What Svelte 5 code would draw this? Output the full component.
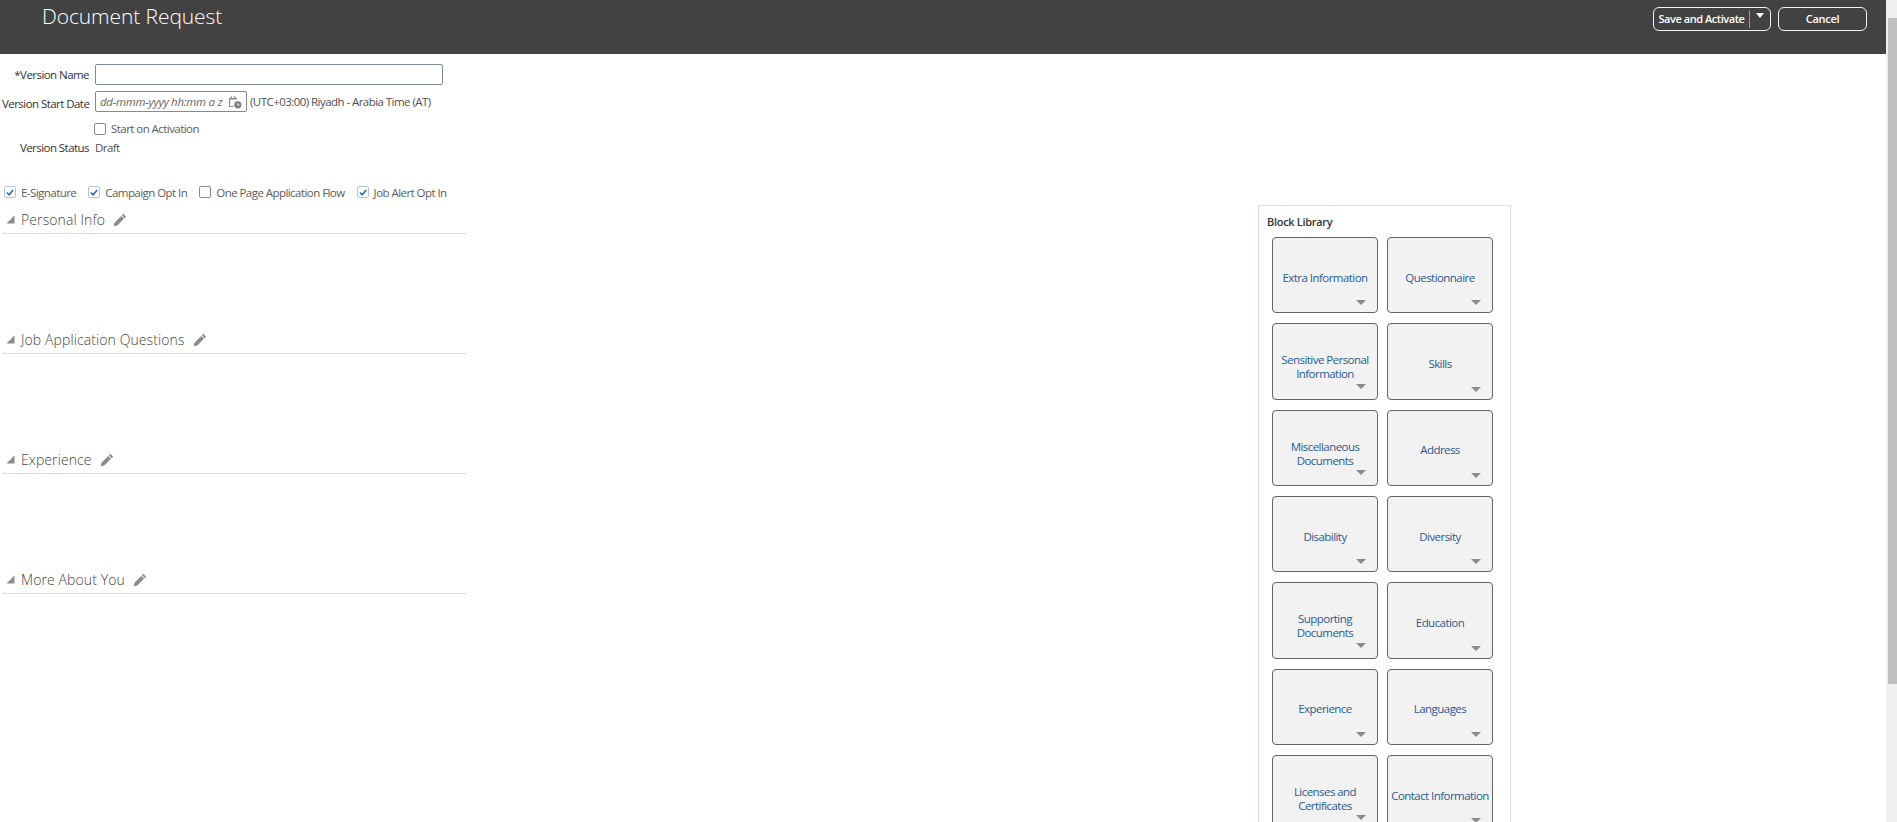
<script>
  const options = [
    { label: 'E-Signature', checked: true },
    { label: 'Campaign Opt In', checked: true },
    { label: 'One Page Application Flow', checked: false },
    { label: 'Job Alert Opt In', checked: true }
  ];
  const sections = ['Personal Info', 'Job Application Questions', 'Experience', 'More About You'];
  const blocks = [
    { label: 'Extra Information' }, { label: 'Questionnaire' },
    { label: 'Sensitive Personal Information', two: true }, { label: 'Skills' },
    { label: 'Miscellaneous Documents', two: true }, { label: 'Address' },
    { label: 'Disability' }, { label: 'Diversity' },
    { label: 'Supporting Documents', two: true }, { label: 'Education' },
    { label: 'Experience' }, { label: 'Languages' },
    { label: 'Licenses and Certificates', two: true }, { label: 'Contact Information' }
  ];
</script>

<div class="page">
  <div class="content">
    <header class="topbar">
      <h1>Document Request</h1>
      <div class="actions">
        <div class="btn split">
          <span class="split-label">Save and Activate</span>
          <span class="split-arrow"><i></i></span>
        </div>
        <div class="btn cancel">Cancel</div>
      </div>
    </header>

    <main class="body">
      <div class="left">
        <div class="form-row name-row">
          <span class="lbl">*Version Name</span>
          <input class="text-input" type="text" />
        </div>
        <div class="form-row date-row">
          <span class="lbl">Version Start Date</span>
          <div class="date-input">
            <span class="placeholder">dd-mmm-yyyy hh:mm a z</span>
            <svg width="14" height="14" viewBox="0 0 14 14">
              <path d="M1 3h8v1.500H2.200V11H5.500v1H1z" fill="#8f8f8f" />
              <path d="M2.800 1.200h1.400v2.600H2.800zM6 1.200h1.400v2.600H6z" fill="#8f8f8f" />
              <circle cx="9.800" cy="9.800" r="3.600" fill="#7d7d7d" />
              <path d="M9.800 8.200v1.800h1.800" stroke="#fff" stroke-width="0.900" fill="none" />
            </svg>
          </div>
          <span class="tz">(UTC+03:00) Riyadh - Arabia Time (AT)</span>
        </div>
        <label class="activation">
          <span class="box"></span>
          <span>Start on Activation</span>
        </label>
        <div class="form-row status-row">
          <span class="lbl">Version Status</span>
          <span class="value">Draft</span>
        </div>

        <div class="options">
          {#each options as opt}
            <span class="option">
              <span class="box" class:checked={opt.checked}>
                {#if opt.checked}
                  <svg width="11" height="11" viewBox="0 0 11 11">
                    <path d="M2 5.500l2.500 2.500L9 2.800" stroke="#1a6fc0" stroke-width="1.700" fill="none" />
                  </svg>
                {/if}
              </span>
              {opt.label}
            </span>
          {/each}
        </div>

        {#each sections as title}
          <section class="section">
            <div class="section-head">
              <svg class="twisty" width="9" height="9" viewBox="0 0 9 9">
                <path d="M8.500 0.500v8h-8z" fill="#8c8c8c" />
              </svg>
              <h2>{title}</h2>
              <svg class="pencil" width="14" height="14" viewBox="0 0 13 13">
                <path d="M9.600 0.800l2.600 2.600-1.400 1.400-2.600-2.600zM7.600 2.800l2.600 2.600-6.200 6.200-3.400 0.800 0.800-3.400z" fill="#8c8c8c" />
              </svg>
            </div>
          </section>
        {/each}
      </div>

      <aside class="library">
        <div class="library-title">Block Library</div>
        <div class="tiles">
          {#each blocks as block}
            <div class="tile" class:two={block.two}>
              <span>{block.label}</span>
              <i class="tile-arrow"></i>
            </div>
          {/each}
        </div>
      </aside>
    </main>
  </div>

  <div class="scrollbar">
    <div class="thumb"></div>
  </div>
</div>

<style>
  :global(body) {
    margin: 0;
    background: #fff;
    overflow: hidden;
  }

  .page {
    display: flex;
    height: 822px;
    overflow: hidden;
    font-family: "Open Sans", "Liberation Sans", sans-serif;
    font-size: 11.5px;
    letter-spacing: -0.55px;
    color: #4f4f4f;
  }

  .content {
    flex: 1;
    min-width: 0;
  }

  .topbar {
    height: 54px;
    background: #424242;
    display: flex;
    justify-content: space-between;
    padding: 0 19px 0 42px;
    box-sizing: border-box;
  }

  h1 {
    margin: 0;
    font-size: 21px;
    font-weight: 300;
    line-height: 33px;
    letter-spacing: -0.1px;
    color: #fff;
  }

  .actions {
    display: flex;
    gap: 7px;
    padding-top: 7px;
  }

  .btn {
    height: 24px;
    box-sizing: border-box;
    border: 1px solid #f2f2f2;
    border-radius: 6px;
    padding-bottom: 2px;
    color: #fff;
    font-weight: 600;
    font-size: 11px;
    letter-spacing: -0.3px;
    display: flex;
    align-items: center;
    justify-content: center;
  }

  .split {
    width: 118px;
  }

  .split-label {
    flex: 1;
    text-align: center;
    white-space: nowrap;
    letter-spacing: -0.45px;
  }

  .split-arrow {
    width: 21px;
    height: 18px;
    margin-top: 2px;
    border-left: 1px solid #8f9aa3;
    display: flex;
    justify-content: center;
    padding-top: 3px;
    box-sizing: border-box;
  }

  .split-arrow i {
    width: 0;
    height: 0;
    border-left: 4px solid transparent;
    border-right: 4px solid transparent;
    border-top: 5px solid #fff;
  }

  .cancel {
    width: 89px;
  }

  .body {
    display: flex;
  }

  .left {
    width: 465px;
    margin-left: 2px;
    padding-top: 10px;
  }

  .form-row {
    display: flex;
    align-items: center;
  }

  .lbl {
    width: 87px;
    margin-right: 6px;
    text-align: right;
    white-space: nowrap;
    color: #333;
  }

  .name-row .lbl {
    padding-bottom: 1px;
  }

  .date-row .lbl {
    padding-top: 3px;
  }

  .text-input {
    width: 348px;
    height: 21px;
    box-sizing: border-box;
    border: 1px solid #7f8c95;
    border-radius: 2px;
    padding: 0;
    background: #fff;
  }

  .date-row {
    margin-top: 6px;
  }

  .date-input {
    width: 152px;
    height: 21px;
    box-sizing: border-box;
    border: 1px solid #7f8c95;
    border-radius: 2px;
    display: flex;
    align-items: center;
    justify-content: space-between;
    padding: 0 4px;
  }

  .placeholder {
    font-style: italic;
    color: #666;
    white-space: nowrap;
    letter-spacing: -0.3px;
  }

  .tz {
    margin-left: 3px;
    white-space: nowrap;
  }

  .activation {
    display: flex;
    align-items: center;
    gap: 5px;
    margin: 9px 0 0 92px;
    color: #5c5c5c;
  }

  .status-row {
    margin-top: 1px;
    height: 20px;
  }

  .box {
    width: 12px;
    height: 12px;
    flex: none;
    box-sizing: border-box;
    border: 1px solid #7f8c95;
    border-radius: 2px;
    display: inline-flex;
    align-items: center;
    justify-content: center;
    background: #fff;
  }

  .box.checked {
    border-color: #b5c4d2;
  }

  .options {
    display: flex;
    gap: 12px;
    margin-top: 27px;
    padding-left: 2px;
    white-space: nowrap;
    color: #5c5c5c;
  }

  .option {
    display: flex;
    align-items: center;
    gap: 5px;
    height: 16px;
  }

  .section {
    height: 120px;
  }

  .section:first-of-type {
    margin-top: 9px;
  }

  .section-head {
    display: flex;
    align-items: center;
    height: 25px;
    box-sizing: border-box;
    border-bottom: 1px solid #d6dfe6;
    padding-left: 4px;
    padding-bottom: 3px;
  }

  .twisty {
    margin-right: 6px;
  }

  h2 {
    margin: 0;
    font-size: 14px;
    font-weight: 300;
    letter-spacing: 0.1px;
    color: #444;
    white-space: nowrap;
  }

  .pencil {
    margin-left: 8px;
  }

  .library {
    width: 253px;
    margin: 151px 0 0 791px;
    padding: 9px 15px 0 8px;
    box-sizing: border-box;
    border: 1px solid #d6dfe6;
    border-bottom: 0;
    flex: none;
  }

  .library-title {
    font-weight: 600;
    font-size: 11px;
    letter-spacing: -0.3px;
    color: #333;
    line-height: 14px;
    margin-bottom: 8px;
  }

  .tiles {
    display: grid;
    grid-template-columns: 106px 106px;
    grid-auto-rows: 76.33px;
    column-gap: 9px;
    row-gap: 10px;
    padding-left: 5px;
  }

  .tile {
    position: relative;
    box-sizing: border-box;
    background: #f2f2f2;
    border: 1px solid #646464;
    border-radius: 4px;
    display: flex;
    align-items: center;
    justify-content: center;
    text-align: center;
    color: #2d5a94;
    line-height: 14px;
    padding: 5px 2px 0;
  }

  .tile.two {
    padding: 12px 6px 0;
  }

  .tile-arrow {
    position: absolute;
    right: 11px;
    bottom: 7px;
    width: 0;
    height: 0;
    border-left: 5px solid transparent;
    border-right: 5px solid transparent;
    border-top: 5px solid #8c8c8c;
  }

  .tile.two .tile-arrow {
    bottom: 10px;
  }

  .scrollbar {
    width: 11px;
    flex: none;
    background: #f0f0f0;
    padding: 18px 0 0 2px;
    box-sizing: border-box;
  }

  .thumb {
    height: 666px;
    background: #c0c0c0;
  }
</style>
